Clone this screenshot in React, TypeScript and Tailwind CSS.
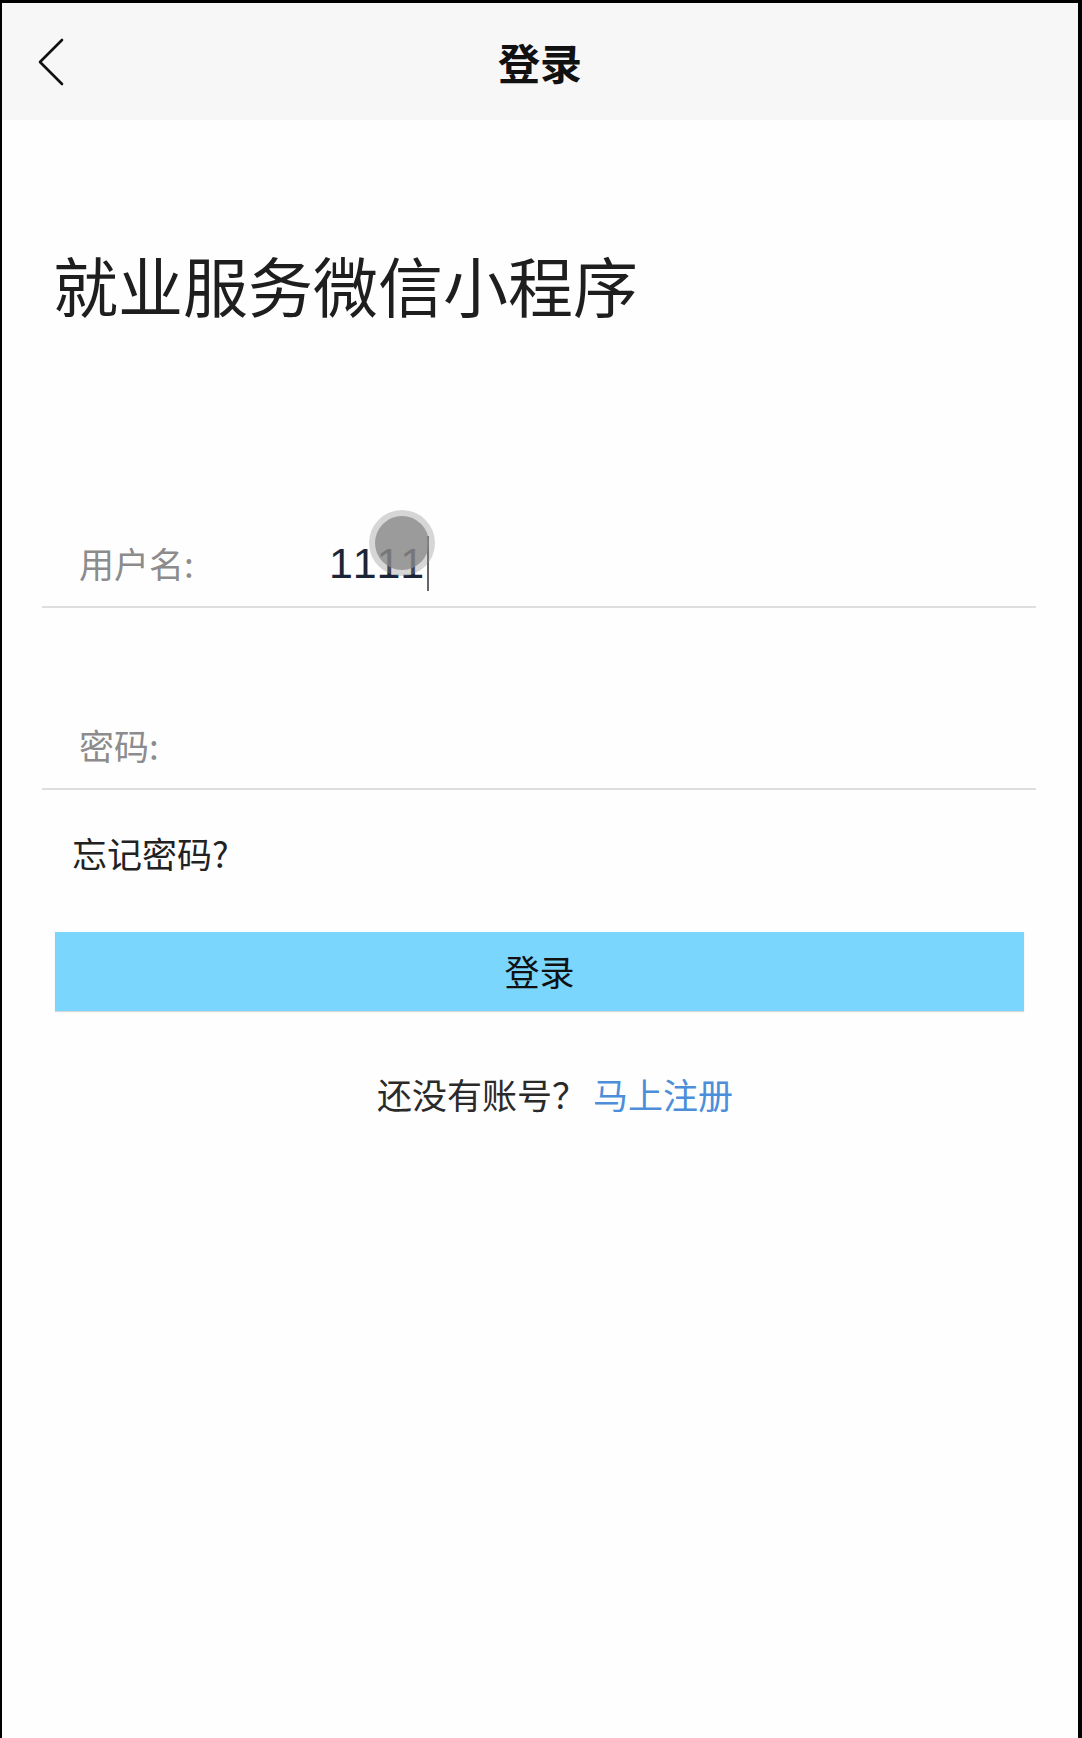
import React from "react";

const cjk = { fontFamily: '"Noto Sans CJK SC", "Noto Sans", sans-serif' };

export default function App() {
  return (
    <div
      className="w-[1082px] h-[1738px] box-border border-t-[3px] border-l-2 border-r-4 border-black bg-[#fefefe] flex flex-col"
      style={cjk}
    >
      {/* Header */}
      <div className="h-[117px] bg-[#f8f7f8] flex items-center shrink-0">
        <div className="w-[120px] pl-[35px] flex items-center">
          <svg width="30" height="48" viewBox="0 0 30 48" fill="none">
            <path d="M25 2 L3 24 L25 46" stroke="#111" strokeWidth="2.6" strokeLinecap="round" strokeLinejoin="round" />
          </svg>
        </div>
        <div className="flex-1 text-center text-[42px] leading-[42px] font-bold text-[#111]">登录</div>
        <div className="w-[120px]" />
      </div>

      {/* Title */}
      <div className="mt-[131px] pl-[51px] h-[66px] text-[65px] leading-[66px] text-[#1e1e1e]">
        就业服务微信小程序
      </div>

      {/* Username row */}
      <div className="mt-[203px] ml-[40px] w-[994px] h-[88px] border-b-2 border-[#dedede] flex items-center relative">
        <div className="pl-[37px] w-[287px] text-[35px] leading-[40px] text-[#8c8c8c]">用户名:</div>
        <div className="relative flex items-center">
          <span
            className="text-[43px] leading-[50px] tracking-[3px] text-[#1c2436]"
            style={{ fontFamily: '"Liberation Sans", Arial, sans-serif' }}
          >
            1111
          </span>
          <span className="ml-[0px] w-[2px] h-[55px] bg-[#666]" />
          <div className="absolute left-[40px] top-[-26px] w-[66px] h-[66px] rounded-full bg-[rgba(140,140,140,0.35)] flex items-center justify-center">
            <div className="w-[54px] h-[54px] rounded-full bg-[rgba(135,135,135,0.75)]" />
          </div>
        </div>
      </div>

      {/* Password row */}
      <div className="mt-[94px] ml-[40px] w-[994px] h-[88px] border-b-2 border-[#dedede] flex items-center">
        <div className="pl-[37px] text-[35px] leading-[40px] text-[#8c8c8c]">密码:</div>
      </div>

      {/* Forgot */}
      <div className="mt-[43px] pl-[70px] h-[40px] text-[35px] leading-[40px] text-[#222]">忘记密码?</div>

      {/* Button */}
      <div className="mt-[59px] ml-[53px] w-[969px] h-[79px] bg-[#7ad6fd] shadow-[0_1px_1px_rgba(0,0,0,0.15)] flex items-center justify-center text-[35px] text-[#111]">
        登录
      </div>

      {/* Register */}
      <div className="mt-[63px] h-[40px] flex items-center justify-center pl-[30px] text-[35px] leading-[40px]">
        <span className="text-[#2a2a2a]">还没有账号？</span>
        <span className="ml-[6px] text-[#4c8ed9]">马上注册</span>
      </div>
    </div>
  );
}
